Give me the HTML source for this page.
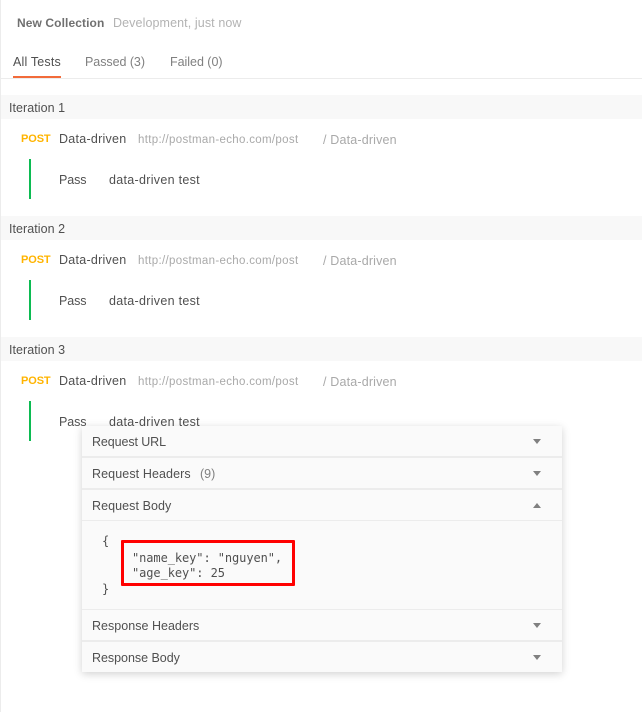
<!DOCTYPE html>
<html>
<head>
<meta charset="utf-8">
<style>
html,body{margin:0;padding:0;background:#fff}
body{width:642px;height:712px;overflow:hidden;position:relative;font-family:"Liberation Sans",sans-serif;font-size:12.5px;color:#505050}
.a{position:absolute;white-space:nowrap;line-height:16px}
.b{position:absolute}
.tri{position:absolute;left:533px;width:0;height:0;border-left:4px solid transparent;border-right:4px solid transparent}
.dn{border-top:5px solid #808080}
.up{border-bottom:5px solid #808080}
.mono{font-family:"DejaVu Sans Mono","Liberation Mono",monospace;font-size:12px;letter-spacing:-.08px;color:#505050;line-height:14px}
.it{letter-spacing:.05px}
.p{font-weight:bold;color:#ffb400;font-size:11px;letter-spacing:-.1px}
.n{letter-spacing:.26px}
.u{color:#a9a9a9;font-size:11.5px;letter-spacing:.32px}
.c{color:#a9a9a9;letter-spacing:.17px}
.t{letter-spacing:.3px}
.s{letter-spacing:-.1px}
</style>
</head>
<body>
<div class="b" style="left:0;top:0;width:1px;height:712px;background:#ececec"></div>

<div class="a" style="left:17px;top:15px;font-size:12px;font-weight:bold;color:#707070;letter-spacing:.1px">New Collection</div>
<div class="a" style="left:113px;top:15px;color:#b3b3b3;letter-spacing:.1px">Development, just now</div>

<div class="a" style="left:13px;top:54px;color:#505050;letter-spacing:.18px">All Tests</div>
<div class="a" style="left:85px;top:54px;color:#808080;letter-spacing:-.05px">Passed (3)</div>
<div class="a" style="left:170px;top:54px;color:#808080;letter-spacing:-.03px">Failed (0)</div>
<div class="b" style="left:13px;top:76px;width:48px;height:2px;background:#f26b3a"></div>
<div class="b" style="left:1px;top:78px;width:641px;height:1px;background:#ececec"></div>

<!-- Iteration 1 -->
<div class="b" style="left:1px;top:95px;width:641px;height:24px;background:#f8f8f8"></div>
<div class="a it" style="left:9px;top:100px">Iteration 1</div>
<div class="a p" style="left:21px;top:131px">POST</div>
<div class="a n" style="left:59px;top:131px">Data-driven</div>
<div class="a u" style="left:138px;top:132px">http://postman-echo.com/post</div>
<div class="a c" style="left:323px;top:132px">/ Data-driven</div>
<div class="b" style="left:29px;top:159px;width:2px;height:40px;background:#0cbb52"></div>
<div class="a s" style="left:59px;top:172px">Pass</div>
<div class="a t" style="left:109px;top:172px">data-driven test</div>

<!-- Iteration 2 -->
<div class="b" style="left:1px;top:216px;width:641px;height:24px;background:#f8f8f8"></div>
<div class="a it" style="left:9px;top:221px">Iteration 2</div>
<div class="a p" style="left:21px;top:252px">POST</div>
<div class="a n" style="left:59px;top:252px">Data-driven</div>
<div class="a u" style="left:138px;top:253px">http://postman-echo.com/post</div>
<div class="a c" style="left:323px;top:253px">/ Data-driven</div>
<div class="b" style="left:29px;top:280px;width:2px;height:40px;background:#0cbb52"></div>
<div class="a s" style="left:59px;top:293px">Pass</div>
<div class="a t" style="left:109px;top:293px">data-driven test</div>

<!-- Iteration 3 -->
<div class="b" style="left:1px;top:337px;width:641px;height:24px;background:#f8f8f8"></div>
<div class="a it" style="left:9px;top:342px">Iteration 3</div>
<div class="a p" style="left:21px;top:373px">POST</div>
<div class="a n" style="left:59px;top:373px">Data-driven</div>
<div class="a u" style="left:138px;top:374px">http://postman-echo.com/post</div>
<div class="a c" style="left:323px;top:374px">/ Data-driven</div>
<div class="b" style="left:29px;top:401px;width:2px;height:40px;background:#0cbb52"></div>
<div class="a s" style="left:59px;top:414px">Pass</div>
<div class="a t" style="left:109px;top:414px">data-driven test</div>

<!-- Popup panel -->
<div class="b" style="left:82px;top:426px;width:480px;height:246px;background:#fafafa;box-shadow:0 2px 8px rgba(0,0,0,.18)"></div>
<div class="b" style="left:82px;top:456px;width:480px;height:2px;background:#ececec"></div>
<div class="b" style="left:82px;top:488px;width:480px;height:2px;background:#ececec"></div>
<div class="b" style="left:82px;top:520px;width:480px;height:1px;background:#ececec"></div>
<div class="b" style="left:82px;top:609px;width:480px;height:1px;background:#ececec"></div>
<div class="b" style="left:82px;top:640px;width:480px;height:2px;background:#ececec"></div>

<div class="a" style="left:92px;top:434px;letter-spacing:-.1px">Request URL</div>
<div class="a" style="left:92px;top:466px;letter-spacing:.1px">Request Headers</div>
<div class="a" style="left:200px;top:466px;color:#808080;letter-spacing:0">(9)</div>
<div class="a" style="left:92px;top:498px;letter-spacing:.07px">Request Body</div>
<div class="a" style="left:92px;top:618px;letter-spacing:.02px">Response Headers</div>
<div class="a" style="left:92px;top:650px;letter-spacing:-.03px">Response Body</div>

<div class="tri dn" style="top:439px"></div>
<div class="tri dn" style="top:471px"></div>
<div class="tri up" style="top:503px"></div>
<div class="tri dn" style="top:623px"></div>
<div class="tri dn" style="top:655px"></div>

<div class="a mono" style="left:102px;top:534px">{</div>
<div class="a mono" style="left:132px;top:551px">"name_key": "nguyen",</div>
<div class="a mono" style="left:132px;top:566px">"age_key": 25</div>
<div class="a mono" style="left:102px;top:582px">}</div>
<div class="b" style="left:121px;top:540px;width:168px;height:40px;border:3px solid #f00;border-radius:1px"></div>
</body>
</html>
